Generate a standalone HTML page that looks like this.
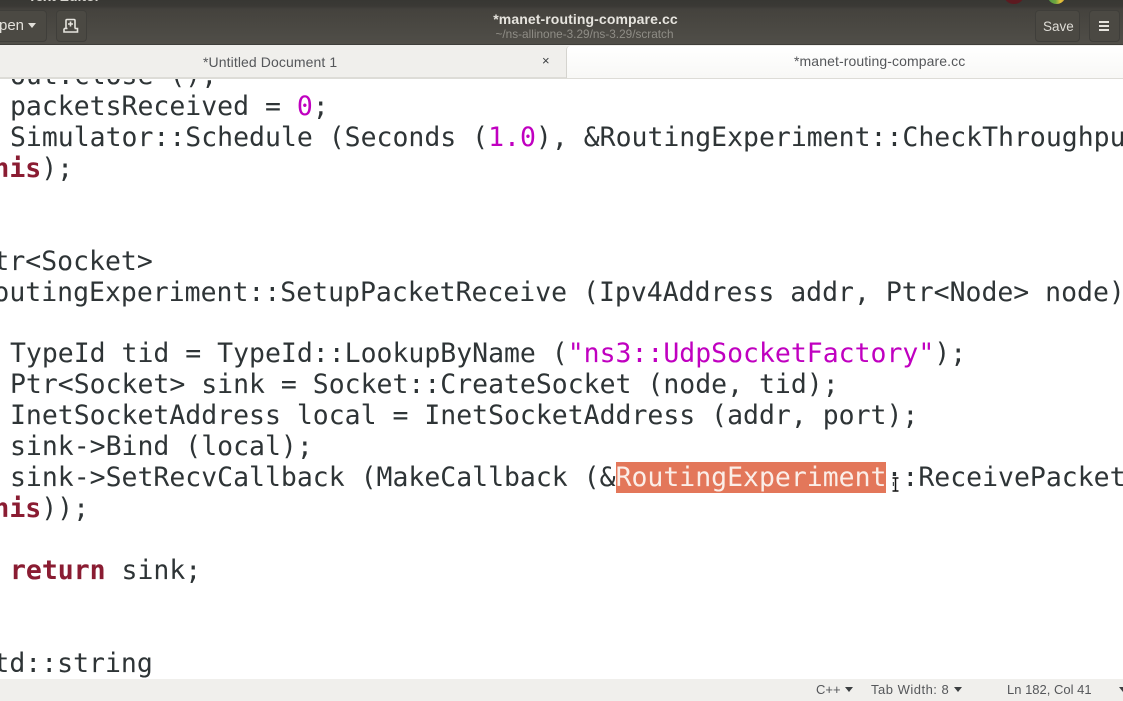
<!DOCTYPE html>
<html><head><meta charset="utf-8"><style>
html,body{margin:0;padding:0;background:#fff}
#r{position:relative;width:1123px;height:701px;overflow:hidden;background:#fff;font-family:"Liberation Sans",sans-serif}
.l{position:absolute;font-family:"DejaVu Sans Mono",monospace;font-size:26.47px;line-height:31px;height:31px;white-space:pre;color:#2e3436}
.m{color:#c000c0}.k{color:#8a1c32;font-weight:bold}
.s{background:#e3775a;color:#fbeee8;display:inline-block;height:31px;vertical-align:top}
.a{position:absolute;white-space:pre}
.b{position:absolute;border:1px solid #3f3e3a;border-radius:4px;background:#4b4943;box-sizing:border-box}
.u{position:absolute;width:0;height:0;border-left:4.5px solid transparent;border-right:4.5px solid transparent}
</style></head><body><div id="r">
<div style="position:absolute;left:0;top:0;width:1123px;height:45px;background:linear-gradient(#383733 0,#3a3935 6px,#44423d 9px,#504e48 44px)"></div>
<div style="position:absolute;left:0;top:44px;width:1123px;height:1px;background:#3f3e3a"></div>
<div class="a" style="left:28px;top:-12px;font-size:14px;color:#d8d6d0;line-height:16px;font-weight:bold">Text Editor</div>
<div class="b" style="left:-30px;top:10px;width:77px;height:32px"></div>
<div class="a" style="left:-1px;top:17px;font-size:15px;color:#e2e0da;line-height:18px">pen</div>
<div class="u" style="left:28px;top:23px;border-top:5px solid #e2e0da"></div>
<div class="b" style="left:56px;top:10px;width:31px;height:32px"></div>
<svg style="position:absolute;left:62px;top:17px" width="18" height="17" viewBox="0 0 18 17"><path d="M4 11V3.5a1 1 0 0 1 1-1h7a1 1 0 0 1 1 1V11M2 11.5h3.5M12.5 11.5H15.5V15H2V11.5M8.5 4.5V9.5M6 7H11" fill="none" stroke="#e6e4de" stroke-width="1.6"/></svg>
<div class="a" style="left:0;width:1171px;top:11px;text-align:center;font-size:14px;font-weight:bold;color:#e6e4de;line-height:17px;letter-spacing:.1px">*manet-routing-compare.cc</div>
<div class="a" style="left:0;width:1169px;top:27px;text-align:center;font-size:11.8px;color:#8f8d86;line-height:14px">~/ns-allinone-3.29/ns-3.29/scratch</div>
<div class="b" style="left:1035px;top:10px;width:45px;height:32px"></div>
<div class="a" style="left:1043px;top:18px;font-size:13.5px;color:#dfddd7;line-height:18px">Save</div>
<div class="b" style="left:1089px;top:10px;width:31px;height:32px"></div>
<div style="position:absolute;left:1099px;top:21px;width:10px;height:2px;background:#e6e4de"></div>
<div style="position:absolute;left:1099px;top:25px;width:10px;height:2px;background:#e6e4de"></div>
<div style="position:absolute;left:1099px;top:29px;width:10px;height:2px;background:#e6e4de"></div>
<div style="position:absolute;left:1004px;top:-14px;width:20px;height:18px;border-radius:50%;background:#5d1a20"></div>
<div style="position:absolute;left:1047px;top:-16px;width:19px;height:20px;border-radius:50%;background:linear-gradient(90deg,#4c9a45 0,#6fa53f 45%,#e2c23a 70%,#d9a030 100%)"></div>
<div style="position:absolute;left:0;top:45px;width:1123px;height:33px;background:#f0efec"></div>
<div style="position:absolute;left:0;top:77px;width:1123px;height:2px;background:#dddcd7"></div>
<div style="position:absolute;left:566px;top:46px;width:557px;height:32px;background:linear-gradient(#fff,#f8f8f6);border-left:1px solid #d5d4cf;border-top-left-radius:4px;box-sizing:border-box"></div>
<div class="a" style="left:203px;top:54px;font-size:14px;letter-spacing:.1px;color:#55575a;line-height:16px">*Untitled Document 1</div>
<div class="a" style="left:542px;top:53px;font-size:13px;color:#3c3f41;line-height:16px">×</div>
<div class="a" style="left:794px;top:53px;font-size:14px;letter-spacing:.1px;color:#55575a;line-height:16px">*manet-routing-compare.cc</div>
<div style="position:absolute;left:0;top:79px;width:1123px;height:600px;overflow:hidden">
<div class="l" style="left:10px;top:-19px">out.close ();</div>
<div class="l" style="left:10px;top:12px">packetsReceived = <span class="m">0</span>;</div>
<div class="l" style="left:10px;top:43px">Simulator::Schedule (Seconds (<span class="m">1.0</span>), &amp;RoutingExperiment::CheckThroughput,</div>
<div class="l" style="left:-22.5px;top:74px"><span class="k">this</span>);</div>
<div class="l" style="left:-22.5px;top:167px">Ptr&lt;Socket&gt;</div>
<div class="l" style="left:-22.5px;top:198px">RoutingExperiment::SetupPacketReceive (Ipv4Address addr, Ptr&lt;Node&gt; node)</div>
<div class="l" style="left:10px;top:259px">TypeId tid = TypeId::LookupByName (<span class="m">"ns3::UdpSocketFactory"</span>);</div>
<div class="l" style="left:10px;top:290px">Ptr&lt;Socket&gt; sink = Socket::CreateSocket (node, tid);</div>
<div class="l" style="left:10px;top:321px">InetSocketAddress local = InetSocketAddress (addr, port);</div>
<div class="l" style="left:10px;top:352px">sink-&gt;Bind (local);</div>
<div class="l" style="left:10px;top:383px">sink-&gt;SetRecvCallback (MakeCallback (&amp;<span class="s">RoutingExperiment</span>::ReceivePacket,</div>
<div class="l" style="left:-22.5px;top:414px"><span class="k">this</span>));</div>
<div class="l" style="left:10px;top:476px"><span class="k">return</span> sink;</div>
<div class="l" style="left:-22.5px;top:569px">std::string</div>
</div>
<svg style="position:absolute;left:891px;top:476px" width="9" height="17" viewBox="0 0 9 17"><path d="M1.5 2H7.5M4.5 2V15M1.5 15H7.5" fill="none" stroke="#fff" stroke-width="3.2"/><path d="M1.5 2H7.5M4.5 2V15M1.5 15H7.5" fill="none" stroke="#111" stroke-width="1.5"/></svg>
<div style="position:absolute;left:0;top:679px;width:1123px;height:22px;background:#f0efec"></div>
<div class="a" style="left:816px;top:682px;font-size:13px;color:#55575a;line-height:16px">C++</div>
<div class="u" style="left:845px;top:687px;border-top:5px solid #3c3f41"></div>
<div class="a" style="left:871px;top:682px;font-size:13px;letter-spacing:.5px;color:#55575a;line-height:16px">Tab Width: 8</div>
<div class="u" style="left:954px;top:687px;border-top:5px solid #3c3f41"></div>
<div class="a" style="left:1007px;top:682px;font-size:13px;color:#55575a;line-height:16px">Ln 182, Col 41</div>
<div class="u" style="left:1119px;top:687px;border-top:5px solid #3c3f41"></div>
</div></body></html>
